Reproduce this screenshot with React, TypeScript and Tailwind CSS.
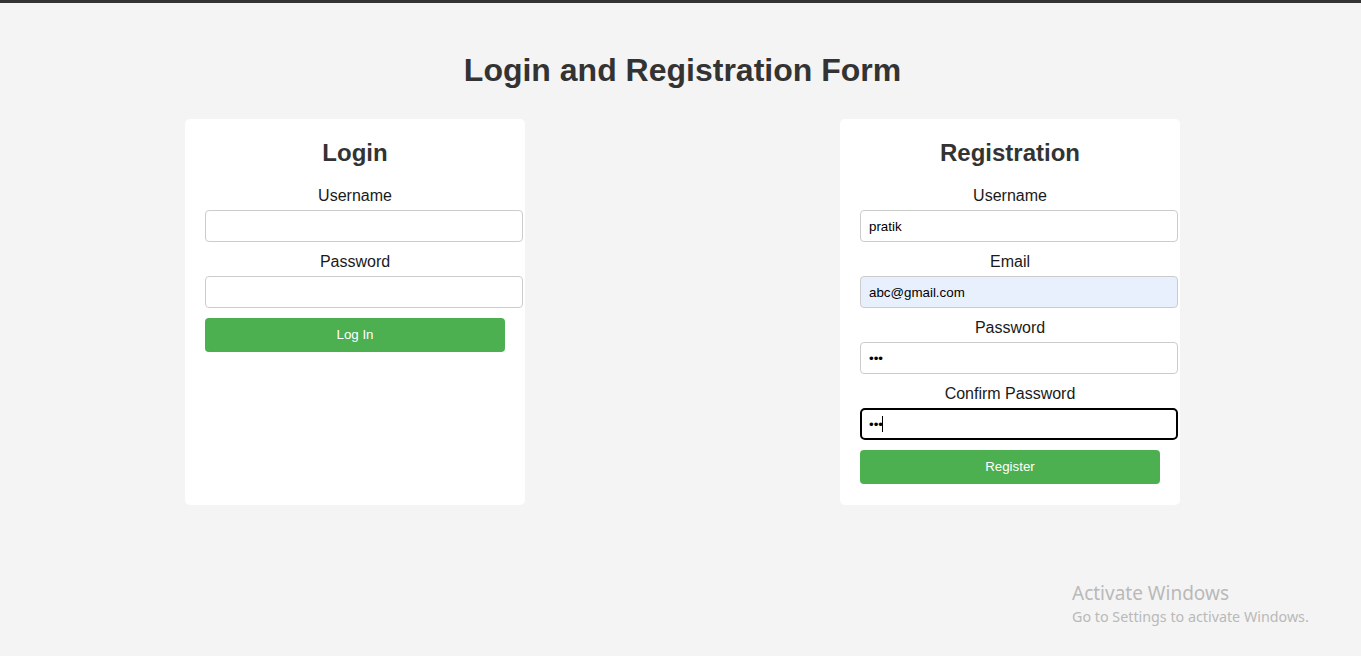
import React from 'react';

interface FieldProps {
  label: string;
  type?: string;
  value?: string;
  autofilled?: boolean;
  focused?: boolean;
}

const Field: React.FC<FieldProps> = ({ label, type = 'text', value = '', autofilled, focused }) => {
  const base =
    'block w-[318px] h-[32px] px-2 text-[13.33px] text-black rounded-[4px] outline-none font-[Liberation_Sans,Arial,sans-serif]';
  const look = focused
    ? 'border-2 border-black rounded-[5px] px-[7px]'
    : autofilled
    ? 'border border-[#ccc] bg-[#e8f0fe]'
    : 'border border-[#ccc] bg-white';

  return (
    <div className="mb-[10px]">
      <label className="block text-center text-[16px] leading-[19px] text-[#1a1a1a] mb-[5px]">{label}</label>
      <div className="relative">
        <input type={type} defaultValue={value} readOnly className={`${base} ${look}`} />
        {/* caret of the focused field */}
        {focused && <span className="absolute left-[22px] top-[8px] w-px h-[16px] bg-black" />}
      </div>
    </div>
  );
};

const FormButton: React.FC<{ text: string }> = ({ text }) => (
  <button className="mt-[2px] block w-[300px] h-[34px] rounded-[4px] bg-[#4caf50] text-white text-[13.33px] font-[Liberation_Sans,Arial,sans-serif]">
    {text}
  </button>
);

export default function App() {
  return (
    <div className="relative h-screen overflow-hidden bg-[#f4f4f4] font-['Liberation_Sans',Arial,sans-serif]">
      <div className="h-[3px] bg-[#333]" />

      <h1 className="mt-[49px] pl-[4px] text-center text-[32px] leading-[37px] font-bold text-[#333]">
        Login and Registration Form
      </h1>

      <div className="mt-[30px] ml-[185px] w-[995px] flex justify-between items-stretch">
        {/* Login */}
        <div className="w-[340px] px-5 pt-5 pb-[21px] bg-white rounded-[5px]">
          <h2 className="text-center text-[24px] leading-[28px] font-bold text-[#333] mb-[19px]">Login</h2>
          <Field label="Username" />
          <Field label="Password" type="password" />
          <FormButton text="Log In" />
        </div>

        {/* Registration */}
        <div className="w-[340px] px-5 pt-5 pb-[21px] bg-white rounded-[5px]">
          <h2 className="text-center text-[24px] leading-[28px] font-bold text-[#333] mb-[19px]">Registration</h2>
          <Field label="Username" value="pratik" />
          <Field label="Email" type="email" value="abc@gmail.com" autofilled />
          <Field label="Password" type="password" value="abc" />
          <Field label="Confirm Password" type="password" value="abc" focused />
          <FormButton text="Register" />
        </div>
      </div>

      {/* Windows activation watermark */}
      <div className="absolute left-[1072px] top-[581px] font-['Noto_Sans',sans-serif] text-[#b9b9b9] pointer-events-none">
        <div className="text-[19px] leading-[25px]">Activate Windows</div>
        <div className="text-[14.3px] leading-[20px] mt-[1px]">Go to Settings to activate Windows.</div>
      </div>
    </div>
  );
}
